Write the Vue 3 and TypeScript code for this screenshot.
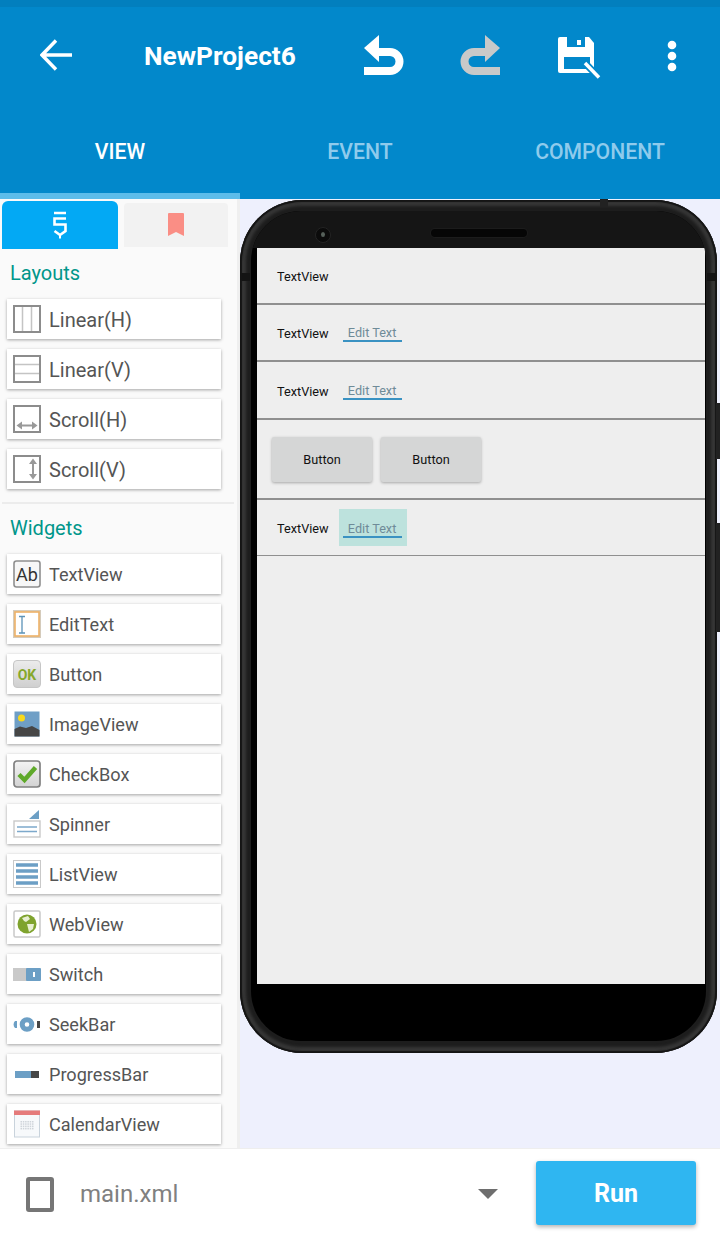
<script setup lang="ts">
const layouts = [
  { label: 'Linear(H)', icon: 'lh' },
  { label: 'Linear(V)', icon: 'lv' },
  { label: 'Scroll(H)', icon: 'sh' },
  { label: 'Scroll(V)', icon: 'sv' },
]
const widgets = [
  { label: 'TextView', icon: 'text' },
  { label: 'EditText', icon: 'edit' },
  { label: 'Button', icon: 'button' },
  { label: 'ImageView', icon: 'image' },
  { label: 'CheckBox', icon: 'check' },
  { label: 'Spinner', icon: 'spinner' },
  { label: 'ListView', icon: 'list' },
  { label: 'WebView', icon: 'web' },
  { label: 'Switch', icon: 'switch' },
  { label: 'SeekBar', icon: 'seek' },
  { label: 'ProgressBar', icon: 'progress' },
  { label: 'CalendarView', icon: 'calendar' },
]
const groups = [
  { title: 'Layouts', items: layouts, small: false },
  { title: 'Widgets', items: widgets, small: true },
]
const calendarDots: number[][] = []
for (let r = 0; r < 4; r++) for (let c = 0; c < 6; c++) calendarDots.push([7.500 + c * 2.300, 11 + r * 2.300])
</script>

<template>
  <div class="page">
    <header class="header">
      <div class="status"></div>
      <div class="toolbar">
        <svg class="ic back" width="32" height="32" viewBox="0 0 32 32">
          <path d="M32 16H3M16 1.500L2 16l14 14.500" fill="none" stroke="#fff" stroke-width="3.400" />
        </svg>
        <span class="title">NewProject6</span>
        <svg class="ic undo" width="40" height="40" viewBox="0 0 40 40">
          <path d="M14 17H26a9.500 9.500 0 0 1 0 19H0" fill="none" stroke="#fff" stroke-width="8" />
          <path d="M0 13L15 0V27Z" fill="#fff" />
        </svg>
        <svg class="ic redo" width="40" height="40" viewBox="0 0 40 40">
          <path d="M26 17H14a9.500 9.500 0 0 0 0 19H40" fill="none" stroke="#c9c9c9" stroke-width="8" />
          <path d="M40 13L25 0V27Z" fill="#c9c9c9" />
        </svg>
        <svg class="ic save" width="43" height="42" viewBox="0 0 43 42">
          <path d="M2 0H31L36 6V34a2 2 0 0 1-2 2H2a2 2 0 0 1-2-2V2A2 2 0 0 1 2 0Z" fill="#fff" />
          <path d="M9 0H27V10H9Z" fill="#0288cb" />
          <path d="M19 3H23V8H19Z" fill="#fff" />
          <path d="M6 20H32V32H6Z" fill="#0288cb" />
          <path d="M25 24L41 40.500" stroke="#0288cb" stroke-width="7" />
          <path d="M27 26L41 40.500" stroke="#fff" stroke-width="3.500" />
        </svg>
        <svg class="ic more" width="10" height="32" viewBox="0 0 10 32">
          <circle cx="5" cy="5" r="4.300" fill="#fff" />
          <circle cx="5" cy="16" r="4.300" fill="#fff" />
          <circle cx="5" cy="27" r="4.300" fill="#fff" />
        </svg>
      </div>
      <nav class="tabs">
        <span class="tab active">VIEW</span>
        <span class="tab">EVENT</span>
        <span class="tab">COMPONENT</span>
      </nav>
      <div class="indicator"></div>
    </header>

    <div class="content">
      <aside class="sidebar">
        <div class="side-tabs">
          <div class="side-tab on">
            <svg width="18" height="30" viewBox="0 0 18 30">
              <path d="M3 3H15M15 8.500H3.500V14.500H14.500V21L9 25L3.500 21" fill="none" stroke="#fff" stroke-width="2.600" />
              <path d="M9 25V28.500" stroke="#fff" stroke-width="2" />
            </svg>
          </div>
          <div class="side-tab off">
            <svg width="16" height="24" viewBox="0 0 16 24">
              <path d="M0 1a1 1 0 0 1 1-1H15a1 1 0 0 1 1 1V23L8 19L0 23Z" fill="#fa8e85" />
            </svg>
          </div>
        </div>

        <section v-for="(g, gi) in groups" :key="g.title" class="group">
          <div v-if="gi > 0" class="divider"></div>
          <h2 class="group-title">{{ g.title }}</h2>
          <div class="cards">
            <div v-for="it in g.items" :key="it.label" class="card">
              <svg class="pi" width="28" height="28" viewBox="0 0 28 28">
                <template v-if="it.icon === 'lh'">
                  <rect x="1" y="1" width="26" height="26" fill="#fff" stroke="#8c8c8c" stroke-width="2" />
                  <path d="M9.500 2V26M18.500 2V26" stroke="#c4c4c4" stroke-width="1.500" />
                </template>
                <template v-else-if="it.icon === 'lv'">
                  <rect x="1" y="1" width="26" height="26" fill="#fff" stroke="#8c8c8c" stroke-width="2" />
                  <path d="M2 9.500H26M2 18.500H26" stroke="#c4c4c4" stroke-width="1.500" />
                </template>
                <template v-else-if="it.icon === 'sh'">
                  <rect x="1" y="1" width="26" height="26" fill="#fff" stroke="#8c8c8c" stroke-width="2" />
                  <path d="M7 20.500H21" stroke="#999" stroke-width="2" />
                  <path d="M3.500 20.500L9 16.500V24.500ZM24.500 20.500L19 16.500V24.500Z" fill="#999" />
                </template>
                <template v-else-if="it.icon === 'sv'">
                  <rect x="1" y="1" width="26" height="26" fill="#fff" stroke="#8c8c8c" stroke-width="2" />
                  <path d="M20 7V21" stroke="#999" stroke-width="2" />
                  <path d="M20 3.500L16 9H24ZM20 24.500L16 19H24Z" fill="#999" />
                </template>
                <template v-else-if="it.icon === 'text'">
                  <rect x="1" y="1" width="26" height="26" rx="2.500" fill="#f7f7f7" stroke="#8f8f8f" stroke-width="1.600" />
                  <text x="14" y="21" class="ab">Ab</text>
                </template>
                <template v-else-if="it.icon === 'edit'">
                  <rect x="0" y="0" width="28" height="28" fill="#d5cbbb" />
                  <rect x="2" y="2" width="24" height="24" fill="#fff" stroke="#eeb268" stroke-width="1.600" />
                  <path d="M6 6.500H12M6 23H12M9 6.500V23" fill="none" stroke="#5b93b8" stroke-width="1.300" />
                </template>
                <template v-else-if="it.icon === 'button'">
                  <defs>
                    <linearGradient id="okbg" x1="0" y1="0" x2="0" y2="1">
                      <stop offset="0" stop-color="#ececec" />
                      <stop offset="1" stop-color="#cfcfcf" />
                    </linearGradient>
                  </defs>
                  <rect x="0.500" y="0.500" width="27" height="27" rx="3.500" fill="url(#okbg)" stroke="#c6c6c6" />
                  <text x="14" y="19.500" class="ok">OK</text>
                </template>
                <template v-else-if="it.icon === 'image'">
                  <rect x="1.500" y="1.500" width="25" height="25" fill="#6f9fc6" />
                  <circle cx="8.500" cy="8" r="3.500" fill="#f8d91b" />
                  <path d="M1.500 19L7 16.500L13 18L19 16L26.500 20V26.500H1.500Z" fill="#464646" />
                </template>
                <template v-else-if="it.icon === 'check'">
                  <defs>
                    <linearGradient id="ckbg" x1="0" y1="0" x2="0" y2="1">
                      <stop offset="0" stop-color="#f4f4f4" />
                      <stop offset="1" stop-color="#d2d2d2" />
                    </linearGradient>
                  </defs>
                  <rect x="1" y="1" width="26" height="26" rx="3" fill="url(#ckbg)" stroke="#808080" stroke-width="1.700" />
                  <path d="M6 14.500L11.500 20L22.500 7.500" fill="none" stroke="#5fa92a" stroke-width="4.500" />
                </template>
                <template v-else-if="it.icon === 'spinner'">
                  <path d="M26 0V9H16Z" fill="#6c9fc5" />
                  <rect x="1" y="11" width="26" height="16" fill="#fff" stroke="#c9c9c9" stroke-width="1.400" />
                  <path d="M4 17H24M4 21.500H24" stroke="#7da9cb" stroke-width="1.500" />
                </template>
                <template v-else-if="it.icon === 'list'">
                  <rect x="0.500" y="0.500" width="27" height="27" fill="#fff" stroke="#c9c9c9" />
                  <path d="M3 5H25M3 11H25M3 17H25M3 23H25" stroke="#6c9fc5" stroke-width="3.600" />
                </template>
                <template v-else-if="it.icon === 'web'">
                  <rect x="1" y="1" width="26" height="26" rx="1.500" fill="#fff" stroke="#c9c9c9" stroke-width="1.500" />
                  <circle cx="14" cy="14" r="9.500" fill="#7fa32e" />
                  <path d="M9 8L15 6L17 9L13 12L11 11ZM14 14L21 14L20 19L16 22L15 18Z" fill="#e7efd2" />
                </template>
                <template v-else-if="it.icon === 'switch'">
                  <rect x="0" y="8" width="14" height="13" fill="#c9c9c9" />
                  <rect x="13" y="8" width="15" height="13" rx="1" fill="#6c9fc5" />
                  <rect x="20" y="12" width="2" height="5" fill="#fff" />
                </template>
                <template v-else-if="it.icon === 'seek'">
                  <path d="M2 11H4V18H2A5 5 0 0 1 2 11Z" fill="#6c9fc5" />
                  <circle cx="14" cy="14.500" r="4.800" fill="none" stroke="#6c9fc5" stroke-width="5" />
                  <path d="M24 11H27V18H24Z" fill="#464646" />
                </template>
                <template v-else-if="it.icon === 'progress'">
                  <rect x="2" y="11" width="18" height="7" fill="#6c9fc5" />
                  <rect x="18" y="11" width="8" height="7" fill="#464646" />
                </template>
                <template v-else-if="it.icon === 'calendar'">
                  <rect x="1.500" y="1" width="25" height="26" fill="#f7f9fb" stroke="#c9d3dc" />
                  <rect x="1" y="0.500" width="26" height="4.500" fill="#e57b7b" />
                  <rect v-for="(d, i) in calendarDots" :key="i" :x="d[0]" :y="d[1]" width="1.500" height="1.500" fill="#cfd4da" />
                </template>
              </svg>
              <span class="card-label" :class="{ small: g.small }">{{ it.label }}</span>
            </div>
          </div>
        </section>
      </aside>

      <main class="main">
        <div class="phone">
          <span class="hw notch"></span>
          <span class="hw side-l"></span>
          <span class="hw side-r"></span>
          <span class="hw vol-a"></span>
          <span class="hw vol-b"></span>
          <div class="bezel">
            <div class="bezel-top">
              <span class="camera"><i></i></span>
              <span class="speaker"></span>
            </div>
            <div class="screen">
              <div class="row h57"><span class="tv">TextView</span></div>
              <div class="row h57"><span class="tv">TextView</span><span class="et">Edit Text</span></div>
              <div class="row h58"><span class="tv">TextView</span><span class="et">Edit Text</span></div>
              <div class="row h80 btns">
                <span class="btn">Button</span>
                <span class="btn">Button</span>
              </div>
              <div class="row h56 last">
                <span class="tv">TextView</span>
                <span class="sel"><span class="et flush">Edit Text</span></span>
              </div>
            </div>
          </div>
        </div>
      </main>
    </div>

    <footer class="footer">
      <span class="device"></span>
      <span class="file">main.xml</span>
      <span class="caret"></span>
      <button class="run">Run</button>
    </footer>
  </div>
</template>

<style scoped>
.page {
  width: 720px;
  height: 1237px;
  display: flex;
  flex-direction: column;
  overflow: hidden;
  font-family: Roboto, "Liberation Sans", sans-serif;
  background: #fff;
}
.header {
  height: 199px;
  flex: none;
  background: #0288cb;
  display: flex;
  flex-direction: column;
}
.status {
  height: 7px;
  background: #027fbe;
  flex: none;
}
.toolbar {
  height: 105px;
  display: flex;
  align-items: flex-start;
  flex: none;
}
.ic {
  flex: none;
  display: block;
}
.back { margin: 32px 0 0 40px; }
.title {
  margin: 33px 0 0 72px;
  width: 152px;
  font-size: 26.300px;
  line-height: 32px;
  font-weight: 700;
  color: #fff;
  white-space: nowrap;
}
.undo { margin: 28px 0 0 68px; }
.redo { margin: 28px 0 0 56px; }
.save { margin: 30px 0 0 58px; }
.more { margin: 33px 0 0 66px; }
.tabs {
  display: grid;
  grid-template-columns: repeat(3, 240px);
  height: 81px;
  flex: none;
}
.tab {
  font-size: 21.200px;
  font-weight: 500;
  color: #8fcbec;
  text-align: center;
  line-height: 80px;
}
.tab.active { color: #fff; }
.indicator {
  height: 6px;
  width: 240px;
  background: #5cbcea;
  flex: none;
}
.content {
  height: 949px;
  display: flex;
  flex: none;
  overflow: hidden;
}
.sidebar {
  width: 237px;
  flex: none;
  background: #fafafa;
  border-right: 3px solid #efefef;
  overflow: hidden;
}
.side-tabs {
  display: flex;
  align-items: flex-start;
  gap: 6px;
  padding: 2px 0 0 2px;
}
.side-tab {
  display: flex;
  align-items: center;
  justify-content: center;
}
.side-tab.on {
  width: 116px;
  height: 48px;
  background: #03a9f4;
  border-radius: 6px 6px 0 0;
}
.side-tab.off {
  width: 104px;
  height: 44px;
  margin-top: 2px;
  background: #f2f2f2;
  border-radius: 4px 4px 0 0;
}
.group-title {
  margin: 12px 0 14px 10px;
  font-size: 20px;
  line-height: 24px;
  font-weight: 400;
  color: #00968a;
}
.divider {
  height: 2px;
  margin: 13px 3px 0 2px;
  background: #ececec;
}
.cards {
  display: flex;
  flex-direction: column;
  gap: 10px;
  padding-left: 7px;
}
.card {
  width: 214px;
  height: 40px;
  flex: none;
  display: flex;
  align-items: center;
  gap: 8px;
  padding-left: 6px;
  box-sizing: border-box;
  background: #fff;
  box-shadow: 0 1px 3px rgba(0, 0, 0, 0.35);
}
.pi { flex: none; display: block; }
.ab {
  font-family: Roboto, sans-serif;
  font-size: 18px;
  font-weight: 400;
  fill: #333;
  text-anchor: middle;
}
.ok {
  font-family: Roboto, sans-serif;
  font-size: 14px;
  font-weight: 700;
  fill: #86a82c;
  text-anchor: middle;
}
.card-label {
  padding-top: 2px;
  font-size: 20px;
  color: #555;
  white-space: nowrap;
}
.card-label.small {
  padding-top: 0;
  font-size: 18.100px;
}
.main {
  flex: 1;
  min-width: 0;
  background: #eef0fd;
  padding-top: 1px;
}
.phone {
  position: relative;
  width: 477px;
  height: 853px;
  box-sizing: border-box;
  padding: 11px 11px 12px;
  background: #1d1d1d;
  border-radius: 62px;
  box-shadow: inset 0 0 1px 2px #141414, inset 0 0 3px 6px #363636;
}
.hw {
  position: absolute;
  background: #141414;
  display: block;
}
.notch { top: -1px; left: 360px; width: 8px; height: 8px; background: #222; }
.side-l { top: 73px; left: 0; width: 10px; height: 8px; }
.side-r { top: 73px; right: 0; width: 10px; height: 8px; }
.vol-a { top: 203px; right: -3px; width: 4px; height: 56px; background: #222; }
.vol-b { top: 323px; right: -3px; width: 4px; height: 109px; background: #222; }
.bezel {
  height: 100%;
  box-sizing: border-box;
  padding: 0 1px 0 6px;
  background: #000;
  border-radius: 50px;
  overflow: hidden;
  display: flex;
  flex-direction: column;
  position: relative;
}
.bezel-top {
  height: 37px;
  margin: 0 -1px 0 -6px;
  background: #151515;
  flex: none;
  display: flex;
  align-items: center;
  padding-top: 10px;
  box-sizing: border-box;
}
.camera {
  width: 16px;
  height: 16px;
  margin: 0 0 0 64px;
  border-radius: 50%;
  background: #0b0b0b;
  border: 1px solid #242424;
  box-sizing: border-box;
  display: flex;
  align-items: center;
  justify-content: center;
  flex: none;
}
.camera i {
  display: block;
  width: 4px;
  height: 5px;
  border-radius: 50%;
  background: #56605a;
}
.speaker {
  width: 96px;
  height: 8px;
  margin: 0 0 4px 100px;
  border-radius: 4px;
  background: #060606;
  box-shadow: 0 0 0 1px #1c1c1c;
  flex: none;
}
.screen {
  height: 736px;
  flex: none;
  background: #eeeeee;
  display: flex;
  flex-direction: column;
}
.row {
  display: flex;
  align-items: center;
  box-sizing: border-box;
  padding: 2px 0 0 20px;
  border-bottom: 2px solid #8f8f8f;
  flex: none;
}
.h57 { height: 57px; }
.h58 { height: 58px; }
.h80 { height: 80px; }
.h56 { height: 56px; }
.last { border-bottom-width: 1px; }
.btns {
  padding-left: 15px;
  padding-top: 0;
  gap: 9px;
}
.tv {
  font-size: 12.700px;
  color: #111;
  white-space: nowrap;
}
.et {
  width: 59px;
  margin-left: 14px;
  font-size: 12.700px;
  line-height: 14px;
  padding-top: 1px;
  text-align: center;
  color: #6f8b98;
  border-bottom: 2px solid #3a92c2;
  white-space: nowrap;
}
.et.flush {
  margin-left: 0;
  display: block;
}
.sel {
  margin: -2px 0 0 10px;
  width: 68px;
  height: 37px;
  box-sizing: border-box;
  padding: 12px 5px 0 4px;
  background: #bde2dd;
}
.btn {
  width: 100px;
  height: 45px;
  border-radius: 2px;
  background: #d5d6d6;
  box-shadow: 0 1px 3px rgba(0, 0, 0, 0.3);
  display: flex;
  align-items: center;
  justify-content: center;
  font-size: 12.700px;
  color: #111;
}
.footer {
  height: 89px;
  flex: none;
  box-sizing: border-box;
  border-top: 1px solid #eeeeee;
  background: #fff;
  display: flex;
  align-items: center;
}
.device {
  width: 28px;
  height: 35px;
  margin: 2px 0 0 26px;
  box-sizing: border-box;
  border: 4px solid #767676;
  border-radius: 3px;
  flex: none;
}
.file {
  margin: 2px 0 0 26px;
  font-size: 24px;
  color: #808080;
  width: 398px;
  flex: none;
}
.caret {
  width: 0;
  height: 0;
  margin-top: 2px;
  border-left: 10px solid transparent;
  border-right: 10px solid transparent;
  border-top: 10px solid #6e6e6e;
  flex: none;
}
.run {
  width: 160px;
  height: 64px;
  margin: 0 0 0 38px;
  border: 0;
  border-radius: 3px;
  background: #2fb6f1;
  box-shadow: 0 2px 4px rgba(0, 0, 0, 0.3);
  color: #fff;
  font-family: Roboto, "Liberation Sans", sans-serif;
  font-size: 25px;
  font-weight: 700;
  flex: none;
}
</style>
